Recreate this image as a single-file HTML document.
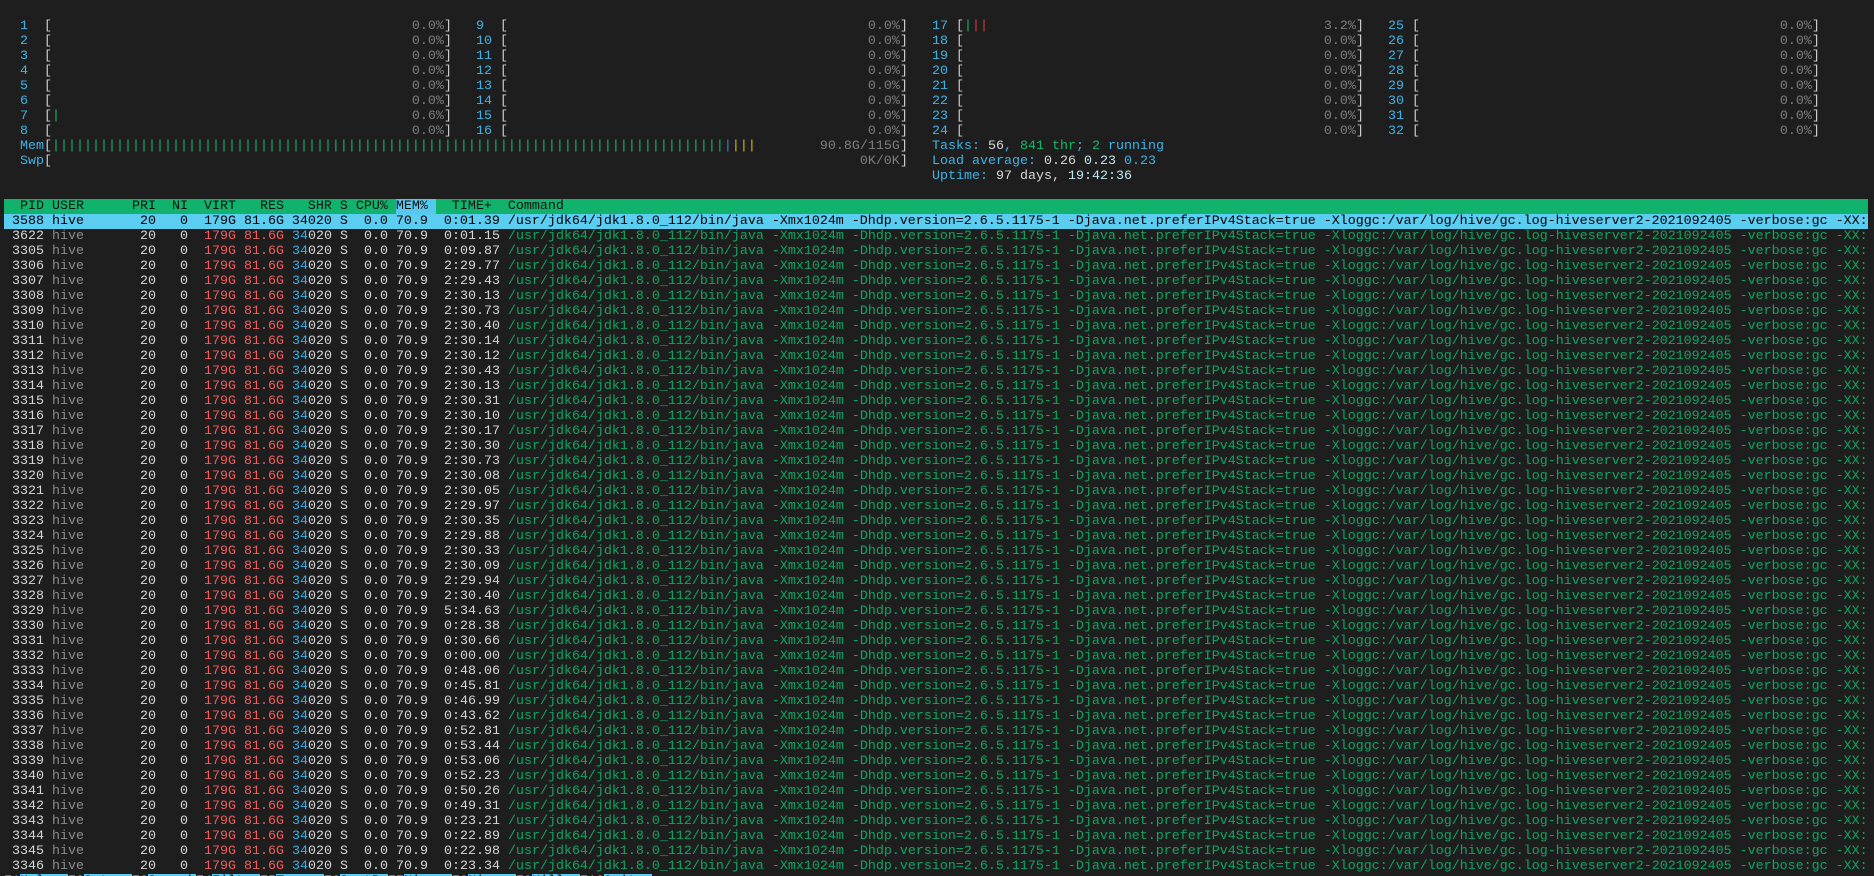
<!DOCTYPE html>
<html><head><meta charset="utf-8"><style>
html,body{margin:0;padding:0;background:#1e1e1e;width:1874px;height:876px;overflow:hidden;}
body{position:relative;font-family:"Liberation Mono","DejaVu Sans Mono",monospace;font-size:13.333px;color:#d6d6d6;}
#wrap{position:absolute;left:0;top:0;width:1874px;height:876px;overflow:hidden;}
.a{position:absolute;white-space:pre;line-height:15px;height:15px;}
.c{color:#3fb3e6}.w{color:#d8d8d8}.p{color:#7d7d7d}.br{color:#cfcfcf}
.gb{color:#14b866}.rb{color:#d83a3a}.yb{color:#c8c000}.bb{color:#3b7fe0}
#list{position:absolute;left:4px;top:198.5px;width:1864px;}
#list div{white-space:pre;height:15px;line-height:15px;}
.hd{background:#10b26c;color:#111;}
.hd em{font-style:normal;background:#56c8ee;}
.sel{background:#5bcdf0;color:#000;}
i{font-style:normal;color:#8c8c8c}
b{font-weight:normal;color:#f25c5c}
u{text-decoration:none;color:#3ab0e8}
s{text-decoration:none;color:#12a463}
.fk{position:absolute;left:4px;top:873.5px;white-space:pre;line-height:15px;height:2.5px;overflow:hidden;}
.fk span{background:#5bcdf0;color:#000}
</style></head><body><div id="wrap">

<div class="a" style="top:19.2px;left:20px"><span class="c">1</span></div>
<div class="a" style="top:34.2px;left:20px"><span class="c">2</span></div>
<div class="a" style="top:49.2px;left:20px"><span class="c">3</span></div>
<div class="a" style="top:64.2px;left:20px"><span class="c">4</span></div>
<div class="a" style="top:79.2px;left:20px"><span class="c">5</span></div>
<div class="a" style="top:94.2px;left:20px"><span class="c">6</span></div>
<div class="a" style="top:109.2px;left:20px"><span class="c">7</span></div>
<div class="a" style="top:124.2px;left:20px"><span class="c">8</span></div>

<div class="a" style="top:19.2px;left:44px"><span class="br">[</span><span class="p">                                             0.0%</span><span class="br">]</span></div>
<div class="a" style="top:34.2px;left:44px"><span class="br">[</span><span class="p">                                             0.0%</span><span class="br">]</span></div>
<div class="a" style="top:49.2px;left:44px"><span class="br">[</span><span class="p">                                             0.0%</span><span class="br">]</span></div>
<div class="a" style="top:64.2px;left:44px"><span class="br">[</span><span class="p">                                             0.0%</span><span class="br">]</span></div>
<div class="a" style="top:79.2px;left:44px"><span class="br">[</span><span class="p">                                             0.0%</span><span class="br">]</span></div>
<div class="a" style="top:94.2px;left:44px"><span class="br">[</span><span class="p">                                             0.0%</span><span class="br">]</span></div>
<div class="a" style="top:109.2px;left:44px"><span class="br">[</span><span class="gb">|</span><span class="p">                                            0.6%</span><span class="br">]</span></div>
<div class="a" style="top:124.2px;left:44px"><span class="br">[</span><span class="p">                                             0.0%</span><span class="br">]</span></div>

<div class="a" style="top:19.2px;left:476px"><span class="c">9  </span><span class="br">[</span><span class="p">                                             0.0%</span><span class="br">]</span></div>
<div class="a" style="top:34.2px;left:476px"><span class="c">10 </span><span class="br">[</span><span class="p">                                             0.0%</span><span class="br">]</span></div>
<div class="a" style="top:49.2px;left:476px"><span class="c">11 </span><span class="br">[</span><span class="p">                                             0.0%</span><span class="br">]</span></div>
<div class="a" style="top:64.2px;left:476px"><span class="c">12 </span><span class="br">[</span><span class="p">                                             0.0%</span><span class="br">]</span></div>
<div class="a" style="top:79.2px;left:476px"><span class="c">13 </span><span class="br">[</span><span class="p">                                             0.0%</span><span class="br">]</span></div>
<div class="a" style="top:94.2px;left:476px"><span class="c">14 </span><span class="br">[</span><span class="p">                                             0.0%</span><span class="br">]</span></div>
<div class="a" style="top:109.2px;left:476px"><span class="c">15 </span><span class="br">[</span><span class="p">                                             0.0%</span><span class="br">]</span></div>
<div class="a" style="top:124.2px;left:476px"><span class="c">16 </span><span class="br">[</span><span class="p">                                             0.0%</span><span class="br">]</span></div>

<div class="a" style="top:19.2px;left:932px"><span class="c">17 </span><span class="br">[</span><span class="gb">|</span><span class="rb">||</span><span class="p">                                          3.2%</span><span class="br">]</span></div>
<div class="a" style="top:34.2px;left:932px"><span class="c">18 </span><span class="br">[</span><span class="p">                                             0.0%</span><span class="br">]</span></div>
<div class="a" style="top:49.2px;left:932px"><span class="c">19 </span><span class="br">[</span><span class="p">                                             0.0%</span><span class="br">]</span></div>
<div class="a" style="top:64.2px;left:932px"><span class="c">20 </span><span class="br">[</span><span class="p">                                             0.0%</span><span class="br">]</span></div>
<div class="a" style="top:79.2px;left:932px"><span class="c">21 </span><span class="br">[</span><span class="p">                                             0.0%</span><span class="br">]</span></div>
<div class="a" style="top:94.2px;left:932px"><span class="c">22 </span><span class="br">[</span><span class="p">                                             0.0%</span><span class="br">]</span></div>
<div class="a" style="top:109.2px;left:932px"><span class="c">23 </span><span class="br">[</span><span class="p">                                             0.0%</span><span class="br">]</span></div>
<div class="a" style="top:124.2px;left:932px"><span class="c">24 </span><span class="br">[</span><span class="p">                                             0.0%</span><span class="br">]</span></div>

<div class="a" style="top:19.2px;left:1388px"><span class="c">25 </span><span class="br">[</span><span class="p">                                             0.0%</span><span class="br">]</span></div>
<div class="a" style="top:34.2px;left:1388px"><span class="c">26 </span><span class="br">[</span><span class="p">                                             0.0%</span><span class="br">]</span></div>
<div class="a" style="top:49.2px;left:1388px"><span class="c">27 </span><span class="br">[</span><span class="p">                                             0.0%</span><span class="br">]</span></div>
<div class="a" style="top:64.2px;left:1388px"><span class="c">28 </span><span class="br">[</span><span class="p">                                             0.0%</span><span class="br">]</span></div>
<div class="a" style="top:79.2px;left:1388px"><span class="c">29 </span><span class="br">[</span><span class="p">                                             0.0%</span><span class="br">]</span></div>
<div class="a" style="top:94.2px;left:1388px"><span class="c">30 </span><span class="br">[</span><span class="p">                                             0.0%</span><span class="br">]</span></div>
<div class="a" style="top:109.2px;left:1388px"><span class="c">31 </span><span class="br">[</span><span class="p">                                             0.0%</span><span class="br">]</span></div>
<div class="a" style="top:124.2px;left:1388px"><span class="c">32 </span><span class="br">[</span><span class="p">                                             0.0%</span><span class="br">]</span></div>

<div class="a" style="top:139.2px;left:20px"><span class="c">Mem</span><span class="br">[</span><span class="gb">||||||||||||||||||||||||||||||||||||||||||||||||||||||||||||||||||||||||||||||||||||</span><span class="bb">|</span><span class="yb">|||</span><span class="p">        90.8G/115G</span><span class="br">]</span></div>
<div class="a" style="top:154.2px;left:20px"><span class="c">Swp</span><span class="br">[</span><span class="p">                                                                                                     0K/0K</span><span class="br">]</span></div>

<div class="a" style="top:139.2px;left:932px"><span class="c">Tasks: </span><span class="w">56</span><span class="c">, </span><span class="gb">841 thr</span><span class="c">; </span><span class="gb">2</span><span class="c"> running</span></div>
<div class="a" style="top:154.2px;left:932px"><span class="c">Load average: </span><span class="w">0.26 </span><span class="c" style="color:#bfe6f5">0.23 </span><span class="c">0.23</span></div>
<div class="a" style="top:169.2px;left:932px"><span class="c">Uptime: </span><span class="w">97 days, </span><span class="c" style="color:#bfe6f5">19:42:36</span></div>

<div id="list">
<div class="hd">  PID USER      PRI  NI  VIRT   RES   SHR S CPU% <em>MEM% </em>  TIME+  Command</div>
<div class="sel"> 3588 hive       20   0  179G 81.6G 34020 S  0.0 70.9  0:01.39 /usr/jdk64/jdk1.8.0_112/bin/java -Xmx1024m -Dhdp.version=2.6.5.1175-1 -Djava.net.preferIPv4Stack=true -Xloggc:/var/log/hive/gc.log-hiveserver2-2021092405 -verbose:gc -XX:</div>
<div> 3622 <i>hive</i>       20   0  <b>179G</b> <b>81.6G</b> <u>34</u>020 S  0.0 70.9  0:01.15 <s>/usr/jdk64/jdk1.8.0_112/bin/java -Xmx1024m -Dhdp.version=2.6.5.1175-1 -Djava.net.preferIPv4Stack=true -Xloggc:/var/log/hive/gc.log-hiveserver2-2021092405 -verbose:gc -XX:</s></div>
<div> 3305 <i>hive</i>       20   0  <b>179G</b> <b>81.6G</b> <u>34</u>020 S  0.0 70.9  0:09.87 <s>/usr/jdk64/jdk1.8.0_112/bin/java -Xmx1024m -Dhdp.version=2.6.5.1175-1 -Djava.net.preferIPv4Stack=true -Xloggc:/var/log/hive/gc.log-hiveserver2-2021092405 -verbose:gc -XX:</s></div>
<div> 3306 <i>hive</i>       20   0  <b>179G</b> <b>81.6G</b> <u>34</u>020 S  0.0 70.9  2:29.77 <s>/usr/jdk64/jdk1.8.0_112/bin/java -Xmx1024m -Dhdp.version=2.6.5.1175-1 -Djava.net.preferIPv4Stack=true -Xloggc:/var/log/hive/gc.log-hiveserver2-2021092405 -verbose:gc -XX:</s></div>
<div> 3307 <i>hive</i>       20   0  <b>179G</b> <b>81.6G</b> <u>34</u>020 S  0.0 70.9  2:29.43 <s>/usr/jdk64/jdk1.8.0_112/bin/java -Xmx1024m -Dhdp.version=2.6.5.1175-1 -Djava.net.preferIPv4Stack=true -Xloggc:/var/log/hive/gc.log-hiveserver2-2021092405 -verbose:gc -XX:</s></div>
<div> 3308 <i>hive</i>       20   0  <b>179G</b> <b>81.6G</b> <u>34</u>020 S  0.0 70.9  2:30.13 <s>/usr/jdk64/jdk1.8.0_112/bin/java -Xmx1024m -Dhdp.version=2.6.5.1175-1 -Djava.net.preferIPv4Stack=true -Xloggc:/var/log/hive/gc.log-hiveserver2-2021092405 -verbose:gc -XX:</s></div>
<div> 3309 <i>hive</i>       20   0  <b>179G</b> <b>81.6G</b> <u>34</u>020 S  0.0 70.9  2:30.73 <s>/usr/jdk64/jdk1.8.0_112/bin/java -Xmx1024m -Dhdp.version=2.6.5.1175-1 -Djava.net.preferIPv4Stack=true -Xloggc:/var/log/hive/gc.log-hiveserver2-2021092405 -verbose:gc -XX:</s></div>
<div> 3310 <i>hive</i>       20   0  <b>179G</b> <b>81.6G</b> <u>34</u>020 S  0.0 70.9  2:30.40 <s>/usr/jdk64/jdk1.8.0_112/bin/java -Xmx1024m -Dhdp.version=2.6.5.1175-1 -Djava.net.preferIPv4Stack=true -Xloggc:/var/log/hive/gc.log-hiveserver2-2021092405 -verbose:gc -XX:</s></div>
<div> 3311 <i>hive</i>       20   0  <b>179G</b> <b>81.6G</b> <u>34</u>020 S  0.0 70.9  2:30.14 <s>/usr/jdk64/jdk1.8.0_112/bin/java -Xmx1024m -Dhdp.version=2.6.5.1175-1 -Djava.net.preferIPv4Stack=true -Xloggc:/var/log/hive/gc.log-hiveserver2-2021092405 -verbose:gc -XX:</s></div>
<div> 3312 <i>hive</i>       20   0  <b>179G</b> <b>81.6G</b> <u>34</u>020 S  0.0 70.9  2:30.12 <s>/usr/jdk64/jdk1.8.0_112/bin/java -Xmx1024m -Dhdp.version=2.6.5.1175-1 -Djava.net.preferIPv4Stack=true -Xloggc:/var/log/hive/gc.log-hiveserver2-2021092405 -verbose:gc -XX:</s></div>
<div> 3313 <i>hive</i>       20   0  <b>179G</b> <b>81.6G</b> <u>34</u>020 S  0.0 70.9  2:30.43 <s>/usr/jdk64/jdk1.8.0_112/bin/java -Xmx1024m -Dhdp.version=2.6.5.1175-1 -Djava.net.preferIPv4Stack=true -Xloggc:/var/log/hive/gc.log-hiveserver2-2021092405 -verbose:gc -XX:</s></div>
<div> 3314 <i>hive</i>       20   0  <b>179G</b> <b>81.6G</b> <u>34</u>020 S  0.0 70.9  2:30.13 <s>/usr/jdk64/jdk1.8.0_112/bin/java -Xmx1024m -Dhdp.version=2.6.5.1175-1 -Djava.net.preferIPv4Stack=true -Xloggc:/var/log/hive/gc.log-hiveserver2-2021092405 -verbose:gc -XX:</s></div>
<div> 3315 <i>hive</i>       20   0  <b>179G</b> <b>81.6G</b> <u>34</u>020 S  0.0 70.9  2:30.31 <s>/usr/jdk64/jdk1.8.0_112/bin/java -Xmx1024m -Dhdp.version=2.6.5.1175-1 -Djava.net.preferIPv4Stack=true -Xloggc:/var/log/hive/gc.log-hiveserver2-2021092405 -verbose:gc -XX:</s></div>
<div> 3316 <i>hive</i>       20   0  <b>179G</b> <b>81.6G</b> <u>34</u>020 S  0.0 70.9  2:30.10 <s>/usr/jdk64/jdk1.8.0_112/bin/java -Xmx1024m -Dhdp.version=2.6.5.1175-1 -Djava.net.preferIPv4Stack=true -Xloggc:/var/log/hive/gc.log-hiveserver2-2021092405 -verbose:gc -XX:</s></div>
<div> 3317 <i>hive</i>       20   0  <b>179G</b> <b>81.6G</b> <u>34</u>020 S  0.0 70.9  2:30.17 <s>/usr/jdk64/jdk1.8.0_112/bin/java -Xmx1024m -Dhdp.version=2.6.5.1175-1 -Djava.net.preferIPv4Stack=true -Xloggc:/var/log/hive/gc.log-hiveserver2-2021092405 -verbose:gc -XX:</s></div>
<div> 3318 <i>hive</i>       20   0  <b>179G</b> <b>81.6G</b> <u>34</u>020 S  0.0 70.9  2:30.30 <s>/usr/jdk64/jdk1.8.0_112/bin/java -Xmx1024m -Dhdp.version=2.6.5.1175-1 -Djava.net.preferIPv4Stack=true -Xloggc:/var/log/hive/gc.log-hiveserver2-2021092405 -verbose:gc -XX:</s></div>
<div> 3319 <i>hive</i>       20   0  <b>179G</b> <b>81.6G</b> <u>34</u>020 S  0.0 70.9  2:30.73 <s>/usr/jdk64/jdk1.8.0_112/bin/java -Xmx1024m -Dhdp.version=2.6.5.1175-1 -Djava.net.preferIPv4Stack=true -Xloggc:/var/log/hive/gc.log-hiveserver2-2021092405 -verbose:gc -XX:</s></div>
<div> 3320 <i>hive</i>       20   0  <b>179G</b> <b>81.6G</b> <u>34</u>020 S  0.0 70.9  2:30.08 <s>/usr/jdk64/jdk1.8.0_112/bin/java -Xmx1024m -Dhdp.version=2.6.5.1175-1 -Djava.net.preferIPv4Stack=true -Xloggc:/var/log/hive/gc.log-hiveserver2-2021092405 -verbose:gc -XX:</s></div>
<div> 3321 <i>hive</i>       20   0  <b>179G</b> <b>81.6G</b> <u>34</u>020 S  0.0 70.9  2:30.05 <s>/usr/jdk64/jdk1.8.0_112/bin/java -Xmx1024m -Dhdp.version=2.6.5.1175-1 -Djava.net.preferIPv4Stack=true -Xloggc:/var/log/hive/gc.log-hiveserver2-2021092405 -verbose:gc -XX:</s></div>
<div> 3322 <i>hive</i>       20   0  <b>179G</b> <b>81.6G</b> <u>34</u>020 S  0.0 70.9  2:29.97 <s>/usr/jdk64/jdk1.8.0_112/bin/java -Xmx1024m -Dhdp.version=2.6.5.1175-1 -Djava.net.preferIPv4Stack=true -Xloggc:/var/log/hive/gc.log-hiveserver2-2021092405 -verbose:gc -XX:</s></div>
<div> 3323 <i>hive</i>       20   0  <b>179G</b> <b>81.6G</b> <u>34</u>020 S  0.0 70.9  2:30.35 <s>/usr/jdk64/jdk1.8.0_112/bin/java -Xmx1024m -Dhdp.version=2.6.5.1175-1 -Djava.net.preferIPv4Stack=true -Xloggc:/var/log/hive/gc.log-hiveserver2-2021092405 -verbose:gc -XX:</s></div>
<div> 3324 <i>hive</i>       20   0  <b>179G</b> <b>81.6G</b> <u>34</u>020 S  0.0 70.9  2:29.88 <s>/usr/jdk64/jdk1.8.0_112/bin/java -Xmx1024m -Dhdp.version=2.6.5.1175-1 -Djava.net.preferIPv4Stack=true -Xloggc:/var/log/hive/gc.log-hiveserver2-2021092405 -verbose:gc -XX:</s></div>
<div> 3325 <i>hive</i>       20   0  <b>179G</b> <b>81.6G</b> <u>34</u>020 S  0.0 70.9  2:30.33 <s>/usr/jdk64/jdk1.8.0_112/bin/java -Xmx1024m -Dhdp.version=2.6.5.1175-1 -Djava.net.preferIPv4Stack=true -Xloggc:/var/log/hive/gc.log-hiveserver2-2021092405 -verbose:gc -XX:</s></div>
<div> 3326 <i>hive</i>       20   0  <b>179G</b> <b>81.6G</b> <u>34</u>020 S  0.0 70.9  2:30.09 <s>/usr/jdk64/jdk1.8.0_112/bin/java -Xmx1024m -Dhdp.version=2.6.5.1175-1 -Djava.net.preferIPv4Stack=true -Xloggc:/var/log/hive/gc.log-hiveserver2-2021092405 -verbose:gc -XX:</s></div>
<div> 3327 <i>hive</i>       20   0  <b>179G</b> <b>81.6G</b> <u>34</u>020 S  0.0 70.9  2:29.94 <s>/usr/jdk64/jdk1.8.0_112/bin/java -Xmx1024m -Dhdp.version=2.6.5.1175-1 -Djava.net.preferIPv4Stack=true -Xloggc:/var/log/hive/gc.log-hiveserver2-2021092405 -verbose:gc -XX:</s></div>
<div> 3328 <i>hive</i>       20   0  <b>179G</b> <b>81.6G</b> <u>34</u>020 S  0.0 70.9  2:30.40 <s>/usr/jdk64/jdk1.8.0_112/bin/java -Xmx1024m -Dhdp.version=2.6.5.1175-1 -Djava.net.preferIPv4Stack=true -Xloggc:/var/log/hive/gc.log-hiveserver2-2021092405 -verbose:gc -XX:</s></div>
<div> 3329 <i>hive</i>       20   0  <b>179G</b> <b>81.6G</b> <u>34</u>020 S  0.0 70.9  5:34.63 <s>/usr/jdk64/jdk1.8.0_112/bin/java -Xmx1024m -Dhdp.version=2.6.5.1175-1 -Djava.net.preferIPv4Stack=true -Xloggc:/var/log/hive/gc.log-hiveserver2-2021092405 -verbose:gc -XX:</s></div>
<div> 3330 <i>hive</i>       20   0  <b>179G</b> <b>81.6G</b> <u>34</u>020 S  0.0 70.9  0:28.38 <s>/usr/jdk64/jdk1.8.0_112/bin/java -Xmx1024m -Dhdp.version=2.6.5.1175-1 -Djava.net.preferIPv4Stack=true -Xloggc:/var/log/hive/gc.log-hiveserver2-2021092405 -verbose:gc -XX:</s></div>
<div> 3331 <i>hive</i>       20   0  <b>179G</b> <b>81.6G</b> <u>34</u>020 S  0.0 70.9  0:30.66 <s>/usr/jdk64/jdk1.8.0_112/bin/java -Xmx1024m -Dhdp.version=2.6.5.1175-1 -Djava.net.preferIPv4Stack=true -Xloggc:/var/log/hive/gc.log-hiveserver2-2021092405 -verbose:gc -XX:</s></div>
<div> 3332 <i>hive</i>       20   0  <b>179G</b> <b>81.6G</b> <u>34</u>020 S  0.0 70.9  0:00.00 <s>/usr/jdk64/jdk1.8.0_112/bin/java -Xmx1024m -Dhdp.version=2.6.5.1175-1 -Djava.net.preferIPv4Stack=true -Xloggc:/var/log/hive/gc.log-hiveserver2-2021092405 -verbose:gc -XX:</s></div>
<div> 3333 <i>hive</i>       20   0  <b>179G</b> <b>81.6G</b> <u>34</u>020 S  0.0 70.9  0:48.06 <s>/usr/jdk64/jdk1.8.0_112/bin/java -Xmx1024m -Dhdp.version=2.6.5.1175-1 -Djava.net.preferIPv4Stack=true -Xloggc:/var/log/hive/gc.log-hiveserver2-2021092405 -verbose:gc -XX:</s></div>
<div> 3334 <i>hive</i>       20   0  <b>179G</b> <b>81.6G</b> <u>34</u>020 S  0.0 70.9  0:45.81 <s>/usr/jdk64/jdk1.8.0_112/bin/java -Xmx1024m -Dhdp.version=2.6.5.1175-1 -Djava.net.preferIPv4Stack=true -Xloggc:/var/log/hive/gc.log-hiveserver2-2021092405 -verbose:gc -XX:</s></div>
<div> 3335 <i>hive</i>       20   0  <b>179G</b> <b>81.6G</b> <u>34</u>020 S  0.0 70.9  0:46.99 <s>/usr/jdk64/jdk1.8.0_112/bin/java -Xmx1024m -Dhdp.version=2.6.5.1175-1 -Djava.net.preferIPv4Stack=true -Xloggc:/var/log/hive/gc.log-hiveserver2-2021092405 -verbose:gc -XX:</s></div>
<div> 3336 <i>hive</i>       20   0  <b>179G</b> <b>81.6G</b> <u>34</u>020 S  0.0 70.9  0:43.62 <s>/usr/jdk64/jdk1.8.0_112/bin/java -Xmx1024m -Dhdp.version=2.6.5.1175-1 -Djava.net.preferIPv4Stack=true -Xloggc:/var/log/hive/gc.log-hiveserver2-2021092405 -verbose:gc -XX:</s></div>
<div> 3337 <i>hive</i>       20   0  <b>179G</b> <b>81.6G</b> <u>34</u>020 S  0.0 70.9  0:52.81 <s>/usr/jdk64/jdk1.8.0_112/bin/java -Xmx1024m -Dhdp.version=2.6.5.1175-1 -Djava.net.preferIPv4Stack=true -Xloggc:/var/log/hive/gc.log-hiveserver2-2021092405 -verbose:gc -XX:</s></div>
<div> 3338 <i>hive</i>       20   0  <b>179G</b> <b>81.6G</b> <u>34</u>020 S  0.0 70.9  0:53.44 <s>/usr/jdk64/jdk1.8.0_112/bin/java -Xmx1024m -Dhdp.version=2.6.5.1175-1 -Djava.net.preferIPv4Stack=true -Xloggc:/var/log/hive/gc.log-hiveserver2-2021092405 -verbose:gc -XX:</s></div>
<div> 3339 <i>hive</i>       20   0  <b>179G</b> <b>81.6G</b> <u>34</u>020 S  0.0 70.9  0:53.06 <s>/usr/jdk64/jdk1.8.0_112/bin/java -Xmx1024m -Dhdp.version=2.6.5.1175-1 -Djava.net.preferIPv4Stack=true -Xloggc:/var/log/hive/gc.log-hiveserver2-2021092405 -verbose:gc -XX:</s></div>
<div> 3340 <i>hive</i>       20   0  <b>179G</b> <b>81.6G</b> <u>34</u>020 S  0.0 70.9  0:52.23 <s>/usr/jdk64/jdk1.8.0_112/bin/java -Xmx1024m -Dhdp.version=2.6.5.1175-1 -Djava.net.preferIPv4Stack=true -Xloggc:/var/log/hive/gc.log-hiveserver2-2021092405 -verbose:gc -XX:</s></div>
<div> 3341 <i>hive</i>       20   0  <b>179G</b> <b>81.6G</b> <u>34</u>020 S  0.0 70.9  0:50.26 <s>/usr/jdk64/jdk1.8.0_112/bin/java -Xmx1024m -Dhdp.version=2.6.5.1175-1 -Djava.net.preferIPv4Stack=true -Xloggc:/var/log/hive/gc.log-hiveserver2-2021092405 -verbose:gc -XX:</s></div>
<div> 3342 <i>hive</i>       20   0  <b>179G</b> <b>81.6G</b> <u>34</u>020 S  0.0 70.9  0:49.31 <s>/usr/jdk64/jdk1.8.0_112/bin/java -Xmx1024m -Dhdp.version=2.6.5.1175-1 -Djava.net.preferIPv4Stack=true -Xloggc:/var/log/hive/gc.log-hiveserver2-2021092405 -verbose:gc -XX:</s></div>
<div> 3343 <i>hive</i>       20   0  <b>179G</b> <b>81.6G</b> <u>34</u>020 S  0.0 70.9  0:23.21 <s>/usr/jdk64/jdk1.8.0_112/bin/java -Xmx1024m -Dhdp.version=2.6.5.1175-1 -Djava.net.preferIPv4Stack=true -Xloggc:/var/log/hive/gc.log-hiveserver2-2021092405 -verbose:gc -XX:</s></div>
<div> 3344 <i>hive</i>       20   0  <b>179G</b> <b>81.6G</b> <u>34</u>020 S  0.0 70.9  0:22.89 <s>/usr/jdk64/jdk1.8.0_112/bin/java -Xmx1024m -Dhdp.version=2.6.5.1175-1 -Djava.net.preferIPv4Stack=true -Xloggc:/var/log/hive/gc.log-hiveserver2-2021092405 -verbose:gc -XX:</s></div>
<div> 3345 <i>hive</i>       20   0  <b>179G</b> <b>81.6G</b> <u>34</u>020 S  0.0 70.9  0:22.98 <s>/usr/jdk64/jdk1.8.0_112/bin/java -Xmx1024m -Dhdp.version=2.6.5.1175-1 -Djava.net.preferIPv4Stack=true -Xloggc:/var/log/hive/gc.log-hiveserver2-2021092405 -verbose:gc -XX:</s></div>
<div> 3346 <i>hive</i>       20   0  <b>179G</b> <b>81.6G</b> <u>34</u>020 S  0.0 70.9  0:23.34 <s>/usr/jdk64/jdk1.8.0_112/bin/java -Xmx1024m -Dhdp.version=2.6.5.1175-1 -Djava.net.preferIPv4Stack=true -Xloggc:/var/log/hive/gc.log-hiveserver2-2021092405 -verbose:gc -XX:</s></div>
</div>

<div class="fk">F1<span>Help  </span>F2<span>Setup </span>F3<span>Search</span>F4<span>Filter</span>F5<span>Tree  </span>F6<span>SortBy</span>F7<span>Nice -</span>F8<span>Nice +</span>F9<span>Kill  </span>F10<span>Quit  </span></div>

</div></body></html>
